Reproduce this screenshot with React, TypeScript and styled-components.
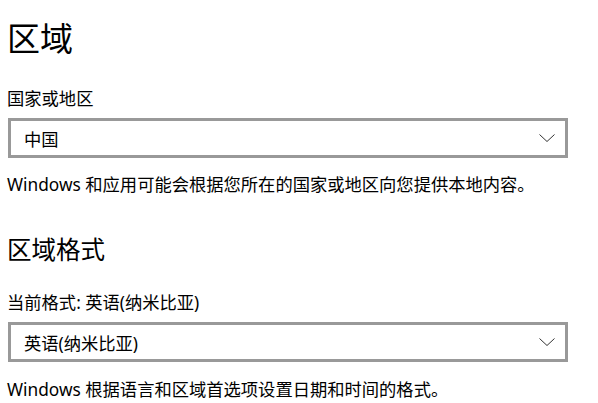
import React from 'react'
import styled, { createGlobalStyle } from 'styled-components'

const GlobalStyle = createGlobalStyle`
  html, body {
    margin: 0;
    padding: 0;
    background: #ffffff;
  }
  body {
    font-family: 'Noto Sans', 'Noto Sans CJK SC', sans-serif;
    color: #000000;
  }
`

const Page = styled.div`
  display: flex;
  flex-direction: column;
  padding: 19px 30px 0 7px;
  width: 561px;
`

const Title = styled.h1`
  margin: 0;
  font-size: 33px;
  line-height: 40px;
  font-weight: 400;
`

const SectionTitle = styled.h2`
  margin: 39px 0 0 0;
  font-size: 24.5px;
  line-height: 30px;
  font-weight: 400;
`

const Label = styled.div<{ $top: number }>`
  margin-top: ${(p) => p.$top}px;
  font-size: 17.3px;
  line-height: 22px;
`

const Select = styled.div`
  margin: 8px 0 0 1px;
  height: 40px;
  box-sizing: border-box;
  border: 3px solid #999999;
  background: #ffffff;
  display: flex;
  align-items: center;
  justify-content: space-between;
  padding: 0 10px 0 13px;
  font-size: 17.3px;
`

const Chevron = styled.svg`
  width: 16px;
  height: 8px;
  flex: none;
`

const Description = styled.p<{ $top: number }>`
  margin: ${(p) => p.$top}px 0 0 0;
  font-size: 17.3px;
  line-height: 22px;
  white-space: nowrap;
`

const ComboBox = ({ value }: { value: string }) => (
  <Select>
    <span>{value}</span>
    <Chevron viewBox="0 0 16 8">
      <path d="M0.5 0.5 L8 7.5 L15.5 0.5" fill="none" stroke="#333" strokeWidth="1" />
    </Chevron>
  </Select>
)

export default function App() {
  return (
    <>
      <GlobalStyle />
      <Page>
        <Title>区域</Title>
        <Label $top={29}>国家或地区</Label>
        <ComboBox value="中国" />
        <Description $top={16}>Windows 和应用可能会根据您所在的国家或地区向您提供本地内容。</Description>
        <SectionTitle>区域格式</SectionTitle>
        <Label $top={27}>当前格式: 英语(纳米比亚)</Label>
        <ComboBox value="英语(纳米比亚)" />
        <Description $top={17}>Windows 根据语言和区域首选项设置日期和时间的格式。</Description>
      </Page>
    </>
  )
}
